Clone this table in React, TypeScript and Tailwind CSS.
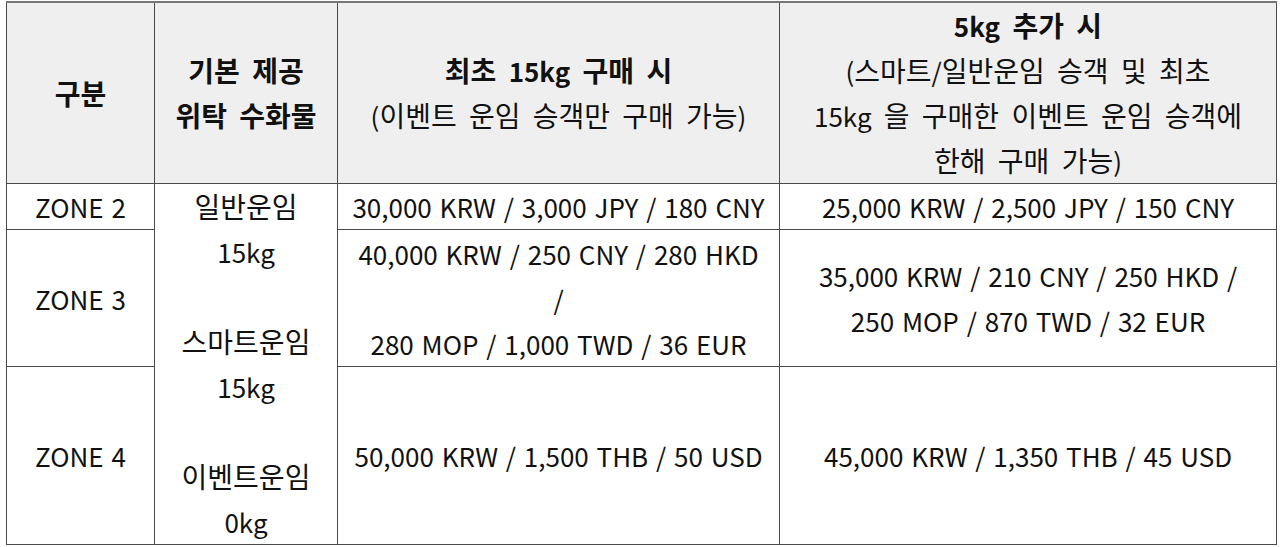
import type { ReactNode } from 'react'

const font = "font-['Noto_Sans_CJK_KR','Noto_Sans',sans-serif]"

const cell = 'border border-[#4a4a4a] text-center align-middle p-0'

// Hangul in the source renders larger than its latin glyphs
function K({ children }: { children: ReactNode }) {
  return <span className="text-[28px] leading-none [word-spacing:6px]">{children}</span>
}

export default function App() {
  return (
    <div className={`min-h-[547px] bg-white pl-[6px] pt-[1px] text-[#111] ${font}`}>
      <table className="w-[1270px] table-fixed border-collapse border-t-2 border-t-[#777] text-[26px] leading-[45px] [word-spacing:2px]">
        <colgroup>
          <col className="w-[148px]" />
          <col className="w-[183px]" />
          <col className="w-[442px]" />
          <col className="w-[497px]" />
        </colgroup>
        <thead>
          <tr className="h-[181px] bg-[#efefef]">
            <th className={`${cell} font-bold`}>
              <K>구분</K>
            </th>
            <th className={`${cell} font-bold`}>
              <K>기본 제공</K>
              <br />
              <K>위탁 수화물</K>
            </th>
            <th className={cell}>
              <div className="font-bold">
                <K>최초 </K>15kg<K> 구매 시</K>
              </div>
              <div className="font-normal">
                (<K>이벤트 운임 승객만 구매 가능</K>)
              </div>
            </th>
            <th className={cell}>
              <div className="font-bold">
                5kg<K> 추가 시</K>
              </div>
              <div className="font-normal">
                (<K>스마트</K>/<K>일반운임 승객 및 최초</K>
                <br />
                15kg<K> 을 구매한 이벤트 운임 승객에</K>
                <br />
                <K>한해 구매 가능</K>)
              </div>
            </th>
          </tr>
        </thead>
        <tbody>
          <tr className="h-[43px]">
            <td className={cell}>ZONE 2</td>
            <td className={`${cell} align-top`} rowSpan={3}>
              <div>
                <K>일반운임</K>
              </div>
              <div>15kg</div>
              <div>&nbsp;</div>
              <div>
                <K>스마트운임</K>
              </div>
              <div>15kg</div>
              <div>&nbsp;</div>
              <div>
                <K>이벤트운임</K>
              </div>
              <div>0kg</div>
            </td>
            <td className={cell}>30,000 KRW / 3,000 JPY / 180 CNY</td>
            <td className={cell}>25,000 KRW / 2,500 JPY / 150 CNY</td>
          </tr>
          <tr className="h-[137px]">
            <td className={cell}>ZONE 3</td>
            <td className={cell}>
              40,000 KRW / 250 CNY / 280 HKD
              <br />
              /
              <br />
              280 MOP / 1,000 TWD / 36 EUR
            </td>
            <td className={cell}>
              35,000 KRW / 210 CNY / 250 HKD /
              <br />
              250 MOP / 870 TWD / 32 EUR
            </td>
          </tr>
          <tr className="h-[178px]">
            <td className={cell}>ZONE 4</td>
            <td className={cell}>50,000 KRW / 1,500 THB / 50 USD</td>
            <td className={cell}>45,000 KRW / 1,350 THB / 45 USD</td>
          </tr>
        </tbody>
      </table>
    </div>
  )
}
